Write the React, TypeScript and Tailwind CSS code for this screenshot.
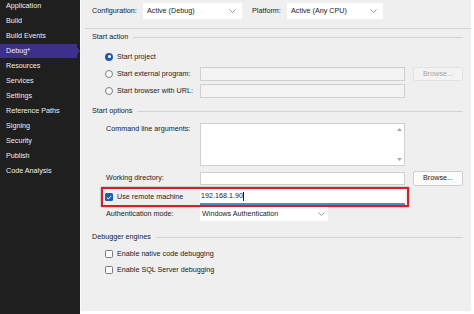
import React from "react";

const navItems = [
  "Application", "Build", "Build Events", "Debug*", "Resources", "Services",
  "Settings", "Reference Paths", "Signing", "Security", "Publish", "Code Analysis",
];

function Chevron() {
  return (
    <svg width="7" height="4" viewBox="0 0 7 4" className="shrink-0">
      <path d="M0.5 0.5 L3.5 3.5 L6.5 0.5" fill="none" stroke="#8c8c8c" strokeWidth="0.9" />
    </svg>
  );
}

function Select({ value, className }: { value: string; className: string }) {
  return (
    <div className={`flex items-center justify-between bg-white ${className}`}>
      <span>{value}</span>
      <Chevron />
    </div>
  );
}

function Group({ title }: { title: string }) {
  return (
    <div className="flex items-center h-[14px] gap-[5px]">
      <span>{title}</span>
      <div className="flex-1 h-px bg-[#d2d2d2]" />
    </div>
  );
}

function Radio({ checked }: { checked?: boolean }) {
  return checked ? (
    <span className="w-[8px] h-[8px] rounded-full bg-[#1b5db0] flex items-center justify-center shrink-0">
      <span className="w-[3px] h-[3px] rounded-full bg-white" />
    </span>
  ) : (
    <span className="w-[8px] h-[8px] rounded-full border border-[#808080] bg-[#f8f8f8] shrink-0" />
  );
}

function Check({ checked }: { checked?: boolean }) {
  return checked ? (
    <span className="w-[8px] h-[8px] rounded-[1.5px] bg-[#1b5db0] flex items-center justify-center shrink-0">
      <svg width="6" height="5" viewBox="0 0 6 5">
        <path d="M0.8 2.6 L2.3 4 L5.2 0.9" fill="none" stroke="white" strokeWidth="1" />
      </svg>
    </span>
  ) : (
    <span className="w-[8px] h-[8px] rounded-[1.5px] border border-[#7a7a7a] bg-[#fafafa] shrink-0" />
  );
}

function Browse({ disabled }: { disabled?: boolean }) {
  return disabled ? (
    <div className="ml-[8px] w-[50px] h-[14px] flex items-center justify-center rounded-[2px] border border-[#e2e2e2] bg-[#f3f3f3] text-[#a3a3a3]">
      Browse...
    </div>
  ) : (
    <div className="ml-[8px] w-[50px] h-[15px] flex items-center justify-center rounded-[2px] border border-[#cfcfcf] bg-[#fbfbfb]">
      Browse...
    </div>
  );
}

export default function App() {
  return (
    <div className="w-[474px] h-[314px] bg-white flex font-['Liberation_Sans',Arial,sans-serif] text-[7.2px] leading-none text-[#1b1b1b] overflow-hidden">
      {/* sidebar */}
      <nav className="w-[80px] h-[314px] bg-[#1f1f1f] text-[#efefef] shrink-0">
        <div className="-mt-[2px] flex flex-col">
          {navItems.map((item) =>
            item === "Debug*" ? (
              <div key={item} className="flex items-center h-[15px]">
                <div className="flex-1 h-[14px] bg-[#3d308c] flex items-center pl-[6px]">{item}</div>
                <div className="w-0 h-0 border-y-[4px] border-y-transparent border-l-[3px] border-l-[#3d308c]" />
              </div>
            ) : (
              <div key={item} className="flex items-center h-[15px] pl-[6px]">{item}</div>
            )
          )}
        </div>
      </nav>
      <div className="w-[1px] h-[311px] bg-[#fafafa] shrink-0" />

      {/* main */}
      <main className="w-[390px] h-[311px] bg-[#efefef] flex flex-col pl-[11px] pr-[8px] shrink-0">
        <div className="flex items-center h-[22px]">
          <span className="w-[51px]">Configuration:</span>
          <Select value="Active (Debug)" className="w-[99px] h-[16px] pl-[4px] pr-[6px]" />
          <span className="ml-[10px] w-[35px]">Platform:</span>
          <Select value="Active (Any CPU)" className="w-[96px] h-[16px] pl-[4px] pr-[6px]" />
        </div>
        <div className="mt-[6px] -ml-[7px] -mr-[8px] h-px bg-[#d6d6d6]" />

        <div className="mt-[1px]">
          <Group title="Start action" />
        </div>
        <div className="pl-[13px] mt-[4px] flex flex-col">
          <div className="flex items-center h-[17px]">
            <div className="w-[95px] flex items-center gap-[4px]">
              <Radio checked />
              <span>Start project</span>
            </div>
          </div>
          <div className="flex items-center h-[17px]">
            <div className="w-[95px] flex items-center gap-[4px]">
              <Radio />
              <span>Start external program:</span>
            </div>
            <div className="w-[205px] h-[14px] border border-[#d0d0d0] bg-[#f3f3f3]" />
            <Browse disabled />
          </div>
          <div className="flex items-center h-[17px]">
            <div className="w-[95px] flex items-center gap-[4px]">
              <Radio />
              <span>Start browser with URL:</span>
            </div>
            <div className="w-[205px] h-[14px] border border-[#d0d0d0] bg-[#f3f3f3]" />
          </div>
        </div>

        <div className="mt-[5px]">
          <Group title="Start options" />
        </div>
        <div className="pl-[13px] flex flex-col">
          <div className="mt-[5px] flex">
            <div className="w-[95px] pt-[2px] pl-[1px]">Command line arguments:</div>
            <div className="w-[205px] h-[43px] border border-[#d0d0d0] bg-white flex justify-end">
              <div className="w-[9px] flex flex-col items-center justify-between py-[4px]">
                <svg width="5" height="3" viewBox="0 0 5 3"><path d="M0 3 L2.5 0 L5 3 Z" fill="#a8a8a8" /></svg>
                <svg width="5" height="3" viewBox="0 0 5 3"><path d="M0 0 L2.5 3 L5 0 Z" fill="#a8a8a8" /></svg>
              </div>
            </div>
          </div>
          <div className="mt-[5px] flex items-center h-[14px]">
            <div className="w-[95px] pl-[1px]">Working directory:</div>
            <div className="w-[205px] h-[13px] border border-[#d0d0d0] bg-white" />
            <Browse />
          </div>
          <div className="mt-[2px] -ml-[4px] w-[308px] h-[20px] border-2 border-[#d61f27] shadow-[0_0_1.5px_rgba(0,0,0,0.45)] px-[2px] flex items-center">
            <div className="w-[95px] flex items-center gap-[4px]">
              <Check checked />
              <span>Use remote machine</span>
            </div>
            <div className="w-[205px] h-[15px] bg-white border-b-2 border-[#4a8bc9] flex items-center pl-[1px]">
              <span>192.168.1.90</span>
              <span className="w-px h-[9px] bg-[#1b1b1b]" />
            </div>
          </div>
          <div className="flex items-center h-[14px]">
            <div className="w-[95px] pl-[1px]">Authentication mode:</div>
            <Select value="Windows Authentication" className="w-[128px] h-[14px] pl-[2px] pr-[3px]" />
          </div>
        </div>

        <div className="mt-[9px]">
          <Group title="Debugger engines" />
        </div>
        <div className="pl-[13px] mt-[2px] flex flex-col">
          <div className="flex items-center h-[16px] gap-[4px]">
            <Check />
            <span>Enable native code debugging</span>
          </div>
          <div className="flex items-center h-[16px] gap-[4px]">
            <Check />
            <span>Enable SQL Server debugging</span>
          </div>
        </div>
      </main>
    </div>
  );
}
